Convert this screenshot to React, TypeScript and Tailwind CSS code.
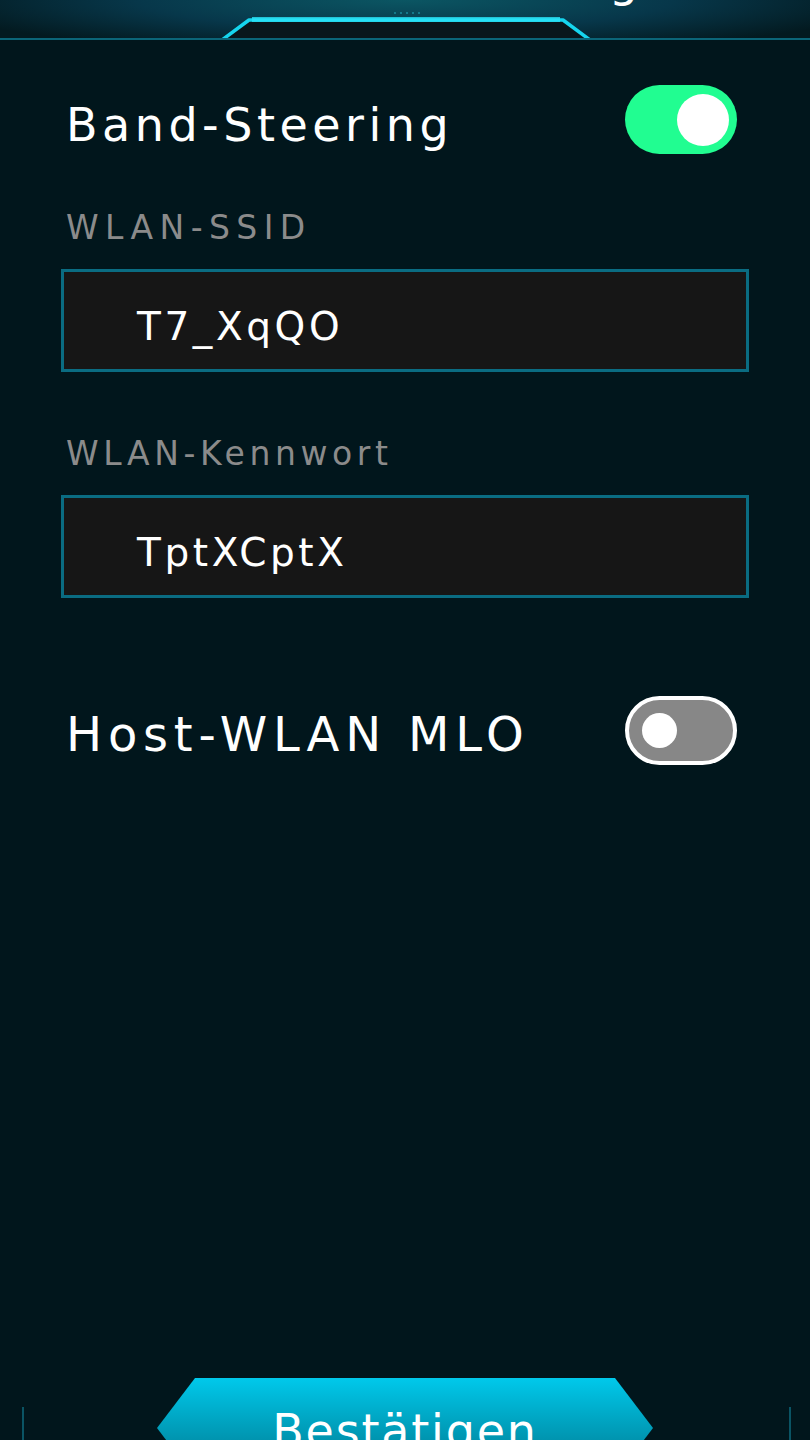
import { useState } from 'react'

const FONT = "font-['DejaVu_Sans','Liberation_Sans',sans-serif]"

function Toggle({ on, onChange }: { on: boolean; onChange: () => void }) {
  if (on) {
    return (
      <button
        onClick={onChange}
        className="w-[112px] h-[69px] rounded-full bg-[#21fd91] flex items-center justify-end pr-[8px] shrink-0"
      >
        <span className="w-[52px] h-[52px] rounded-full bg-white" />
      </button>
    )
  }
  return (
    <button
      onClick={onChange}
      className="w-[112px] h-[69px] rounded-full bg-[#878787] border-[4px] border-white flex items-center pl-[13px] shrink-0"
    >
      <span className="w-[35px] h-[35px] rounded-full bg-white" />
    </button>
  )
}

function Field({ label, value, mt, track }: { label: string; value: string; mt: string; track: string }) {
  return (
    <div className={mt}>
      <div className={`pl-[5px] text-[33px] leading-none ${track} text-[#8b8b8b]`}>{label}</div>
      <div className="mt-[25px] h-[103px] border-[3px] border-[#0a6c82] bg-[#161616] pl-[73px] pt-[35px]">
        <span className="text-[39px] leading-none tracking-[3.6px] text-white">{value}</span>
      </div>
    </div>
  )
}

export default function App() {
  const [band, setBand] = useState(true)
  const [mlo, setMlo] = useState(false)

  return (
    <div className={`${FONT} h-[1440px] overflow-hidden bg-[#01161c] flex flex-col`}>
      {/* header */}
      <div className="relative h-[40px] shrink-0 border-b-2 border-[#0b6578] bg-[radial-gradient(ellipse_60%_140%_at_50%_0%,#0b5663_0%,#07374a_55%,#031a20_100%)] overflow-hidden">
        <span className="absolute left-[609px] top-[-43px] text-[46px] leading-none text-white">g</span>
        <svg className="absolute left-0 top-0" width="810" height="40" viewBox="0 0 810 40">
          <path d="M222 40 L249 20 L563 20 L590 40 Z" fill="#09161b" />
          <path d="M222 40 L249 20 L563 20 L590 40" fill="none" stroke="#16d5ee" strokeWidth="3.5" strokeLinejoin="round" />
          <path d="M252 19.5 L560 19.5" stroke="#2ae4f8" strokeWidth="5" opacity="0.8" />
          <g fill="#1a8ea0" opacity="0.7">
            <rect x="394" y="12" width="2" height="2" />
            <rect x="400" y="12" width="2" height="2" />
            <rect x="406" y="12" width="2" height="2" />
            <rect x="412" y="12" width="2" height="2" />
            <rect x="418" y="12" width="2" height="2" />
          </g>
        </svg>
      </div>

      {/* content */}
      <div className="px-[61px] pt-[45px]">
        <div className="flex items-start justify-between">
          <div className="pl-[5px] mt-[17px] text-[46px] leading-none tracking-[4.5px] text-white">Band-Steering</div>
          <div className="mr-[12px]">
            <Toggle on={band} onChange={() => setBand(v => !v)} />
          </div>
        </div>

        <Field label="WLAN-SSID" value="T7_XqQO" mt="mt-[57px]" track="tracking-[6.4px]" />
        <Field label="WLAN-Kennwort" value="TptXCptX" mt="mt-[65px]" track="tracking-[4.6px]" />

        <div className="mt-[98px] flex items-start justify-between">
          <div className="pl-[5px] mt-[14px] text-[48px] leading-none tracking-[5.8px] text-white">Host-WLAN MLO</div>
          <div className="mr-[12px]">
            <Toggle on={mlo} onChange={() => setMlo(v => !v)} />
          </div>
        </div>
      </div>

      <div className="flex-1" />

      {/* footer */}
      <div className="h-[100px] mb-[-38px] shrink-0 flex items-start">
        <div className="ml-[22px] mt-[29px] w-[2px] self-stretch bg-[#0a5464]" />
        <button className="ml-[133px] w-[496px] h-[100px] bg-gradient-to-b from-[#00c9eb] to-[#00758c] [clip-path:polygon(38px_0,458px_0,100%_50%,458px_100%,38px_100%,0_50%)] flex justify-center pt-[30px]">
          <span className="text-[46px] leading-none tracking-[1.8px] text-white">Bestätigen</span>
        </button>
        <div className="ml-[136px] mt-[29px] w-[2px] self-stretch bg-[#0a5464]" />
      </div>
    </div>
  )
}
